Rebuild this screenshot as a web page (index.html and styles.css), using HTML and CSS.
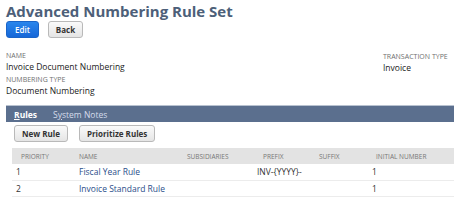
FILE: index.html
```html
<!DOCTYPE html>
<html lang="en">
<head>
    <meta charset="UTF-8">
    <title>Advanced Numbering Rule Set</title>
    <link rel="stylesheet" href="styles.css">
</head>
<body>
    <div class="page">
        <h1 class="title">Advanced Numbering Rule Set</h1>
        <div class="actions">
            <button class="btn btn-primary">Edit</button>
            <button class="btn">Back</button>
        </div>

        <div class="fields">
            <div class="field-col">
                <div class="field">
                    <div class="field-label">Name</div>
                    <div class="field-value">Invoice Document Numbering</div>
                </div>
                <div class="field">
                    <div class="field-label">Numbering Type</div>
                    <div class="field-value">Document Numbering</div>
                </div>
            </div>
            <div class="field-col field-col-right">
                <div class="field">
                    <div class="field-label">Transaction Type</div>
                    <div class="field-value">Invoice</div>
                </div>
            </div>
        </div>

        <div class="tabs">
            <span class="tab tab-active"><u>R</u>ules</span>
            <span class="tab">S<u>y</u>stem Notes</span>
        </div>

        <div class="sublist">
            <div class="sublist-actions">
                <button class="btn">New Rule</button>
                <button class="btn">Prioritize Rules</button>
            </div>
            <table class="grid">
                <thead>
                    <tr>
                        <th class="c-priority">Priority</th>
                        <th class="c-name">Name</th>
                        <th class="c-subs">Subsidiaries</th>
                        <th class="c-prefix">Prefix</th>
                        <th class="c-suffix">Suffix</th>
                        <th class="c-initial">Initial Number</th>
                    </tr>
                </thead>
                <tbody>
                    <tr>
                        <td>1</td>
                        <td><a href="#">Fiscal Year Rule</a></td>
                        <td></td>
                        <td>INV-{YYYY}-</td>
                        <td></td>
                        <td>1</td>
                    </tr>
                    <tr>
                        <td>2</td>
                        <td><a href="#">Invoice Standard Rule</a></td>
                        <td></td>
                        <td></td>
                        <td></td>
                        <td>1</td>
                    </tr>
                </tbody>
            </table>
        </div>
    </div>
</body>
</html>
```

FILE: styles.css
```css
* {
    margin: 0;
    padding: 0;
    box-sizing: border-box;
}

body {
    background-color: white;
    font-family: 'Open Sans', sans-serif;
    color: #333;
    width: 474px;
    height: 212px;
    overflow: hidden;
}

.page {
    padding: 2px 20px 0 6px;
}

.title {
    font-size: 15px;
    font-weight: bold;
    color: #4d5f79;
    line-height: 18px;
}

.actions {
    display: flex;
    gap: 9px;
    margin-top: 1px;
}

.btn {
    font-family: 'Open Sans', sans-serif;
    font-size: 8px;
    font-weight: bold;
    color: #333;
    height: 17px;
    padding: 0 7px;
    border: 1px solid #b9b9b9;
    border-radius: 3px;
    background: linear-gradient(#fafafa, #e5e5e5);
}

.btn-primary {
    background: linear-gradient(#2a86ec, #1667d8);
    border-color: #1a64c8;
    color: white;
    font-weight: 600;
    padding: 0 8px;
}

.fields {
    display: flex;
    justify-content: space-between;
    margin-top: 13px;
}

.field-col-right {
    width: 71px;
    padding-top: 1px;
}

.field {
    margin-bottom: 2px;
}

.field-label {
    font-size: 7px;
    color: #6f6f6f;
    text-transform: uppercase;
    line-height: 10px;
}

.field-value {
    font-size: 8.5px;
    color: #222;
    line-height: 12px;
}

.tabs {
    display: flex;
    gap: 16px;
    align-items: center;
    height: 17px;
    margin-top: 6px;
    padding-left: 8px;
    background-color: #5b6f8e;
    border-top: 1px solid #b8c2d0;
}

.tab {
    font-size: 8.5px;
    color: #d5dceb;
    position: relative;
}

.tab-active {
    color: white;
    font-weight: bold;
}

.tab-active::after {
    content: "";
    position: absolute;
    left: 8px;
    bottom: -5px;
    border-left: 3px solid transparent;
    border-right: 3px solid transparent;
    border-bottom: 3px solid white;
}

.sublist {
    padding-left: 6px;
}

.sublist-actions {
    display: flex;
    gap: 11px;
    padding: 3px 0 0 2px;
}

.grid {
    width: 442px;
    margin-top: 6px;
    border-collapse: collapse;
    font-size: 8.5px;
}

.grid th {
    background-color: #e3e3e3;
    font-size: 6.5px;
    font-weight: normal;
    text-transform: uppercase;
    color: #777;
    height: 16px;
    text-align: left;
}

.grid td {
    height: 16px;
    border-bottom: 1px solid #ececec;
    color: #333;
    padding-left: 4px;
}

.c-priority {
    width: 67px;
    padding-left: 9px;
}

.c-name {
    width: 108px;
    padding-left: 0;
}

.grid td:nth-child(2) {
    padding-left: 0;
}

.c-subs {
    width: 70px;
}

.grid td:nth-child(3),
.grid td:nth-child(4) {
    padding-left: 0;
}

.c-prefix {
    width: 62px;
    padding-left: 6px;
}

.c-suffix {
    width: 53px;
}

.c-initial {
    padding-left: 4px;
}

.grid td:nth-child(6) {
    padding-left: 0;
}

.grid a {
    color: #2b4e8a;
    text-decoration: none;
}
```
